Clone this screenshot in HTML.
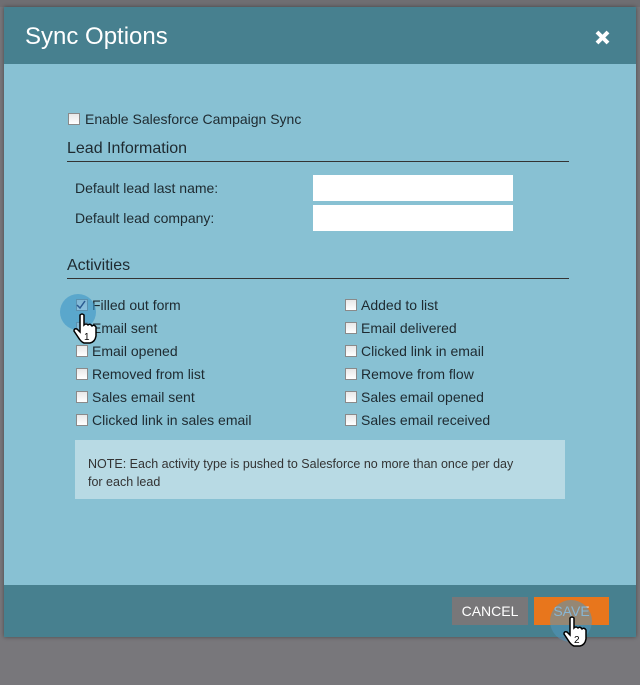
<!DOCTYPE html><html><head><style>
body{margin:0;width:640px;height:685px;background:#78777b;position:relative;overflow:hidden;font-family:"Liberation Sans",sans-serif;}
.a{position:absolute}
.t{font-size:14px;color:#1e2a30;white-space:nowrap}
.cb{position:absolute;width:10px;height:10px;border:1px solid #8a8a8a;background:linear-gradient(#e8e8e8,#fff);}
</style></head><body>
<div class="a" style="left:0;top:0;width:640px;height:7px;background:#6f6e72"></div>
<div class="a" style="left:4px;top:7px;width:632px;height:630px;background:#88c1d3;box-shadow:0 0 4px rgba(0,0,0,.4)"></div>
<div class="a" style="left:4px;top:7px;width:632px;height:57px;background:#47808f"></div>
<div class="a" style="left:25px;top:23px;font-size:24px;color:#fff">Sync Options</div>
<svg class="a" style="left:595px;top:30px" width="15" height="15" viewBox="0 0 15 15"><path d="M2 2L13 13M13 2L2 13" stroke="#fff" stroke-width="4"/></svg>
<div class="cb" style="left:68px;top:113px"></div><div class="a t" style="left:85px;top:111px">Enable Salesforce Campaign Sync</div>
<div class="a" style="left:67px;top:140px;font-size:16px;color:#1e2a30">Lead Information</div>
<div class="a" style="left:67px;top:161px;width:502px;height:1px;background:#333"></div>
<div class="a t" style="left:75px;top:180px">Default lead last name:</div>
<div class="a" style="left:313px;top:175px;width:200px;height:26px;background:#fff"></div>
<div class="a t" style="left:75px;top:210px">Default lead company:</div>
<div class="a" style="left:313px;top:205px;width:200px;height:26px;background:#fff"></div>
<div class="a" style="left:67px;top:257px;font-size:16px;color:#1e2a30">Activities</div>
<div class="a" style="left:67px;top:278px;width:502px;height:1px;background:#333"></div>
<div class="cb" style="left:76px;top:299px"></div><div class="a t" style="left:92px;top:297px">Filled out form</div>
<div class="cb" style="left:76px;top:322px"></div><div class="a t" style="left:92px;top:320px">Email sent</div>
<div class="cb" style="left:76px;top:345px"></div><div class="a t" style="left:92px;top:343px">Email opened</div>
<div class="cb" style="left:76px;top:368px"></div><div class="a t" style="left:92px;top:366px">Removed from list</div>
<div class="cb" style="left:76px;top:391px"></div><div class="a t" style="left:92px;top:389px">Sales email sent</div>
<div class="cb" style="left:76px;top:414px"></div><div class="a t" style="left:92px;top:412px">Clicked link in sales email</div>
<div class="cb" style="left:345px;top:299px"></div><div class="a t" style="left:361px;top:297px">Added to list</div>
<div class="cb" style="left:345px;top:322px"></div><div class="a t" style="left:361px;top:320px">Email delivered</div>
<div class="cb" style="left:345px;top:345px"></div><div class="a t" style="left:361px;top:343px">Clicked link in email</div>
<div class="cb" style="left:345px;top:368px"></div><div class="a t" style="left:361px;top:366px">Remove from flow</div>
<div class="cb" style="left:345px;top:391px"></div><div class="a t" style="left:361px;top:389px">Sales email opened</div>
<div class="cb" style="left:345px;top:414px"></div><div class="a t" style="left:361px;top:412px">Sales email received</div>
<div class="a" style="left:60px;top:294px;width:36px;height:36px;border-radius:50%;background:rgba(60,150,200,.6)"></div>
<svg class="a" style="left:76px;top:300px" width="10" height="10"><path d="M1 5L4 8L9 1" stroke="#2a5a90" stroke-width="1.5" fill="none"/></svg>
<svg class="a" style="left:72px;top:312px" width="30" height="34" viewBox="0 0 30 34"><path d="M8 3Q10 1 12 3L12 13Q14 11 16 13Q18 11 20 14Q22 12 24 15L24 24Q23 30 18 31L12 31Q9 30 6 25L2 19Q2 16 5 17L8 20Z" fill="#fff" stroke="#000" stroke-width="1.5"/><text x="12" y="28" font-size="10" font-family="Liberation Sans" fill="#000">1</text></svg>
<div class="a" style="left:75px;top:440px;width:490px;height:59px;background:#b8dae4"></div>
<div class="a" style="left:88px;top:455px;font-size:12.5px;color:#333;line-height:18px">NOTE: Each activity type is pushed to Salesforce no more than once per day<br>for each lead</div>
<div class="a" style="left:4px;top:585px;width:632px;height:52px;background:#47808f"></div>
<div class="a" style="left:452px;top:597px;width:76px;height:28px;background:#787779;color:#fff;font-size:14px;text-align:center;line-height:28px">CANCEL</div>
<div class="a" style="left:534px;top:597px;width:75px;height:28px;background:#e8761c;color:#cde;font-size:14px;text-align:center;line-height:28px">SAVE</div>
<div class="a" style="left:550px;top:600px;width:42px;height:42px;border-radius:50%;background:rgba(80,150,190,.55)"></div>
<svg class="a" style="left:562px;top:614px" width="30" height="36" viewBox="0 0 30 34"><path d="M8 3Q10 1 12 3L12 13Q14 11 16 13Q18 11 20 14Q22 12 24 15L24 24Q23 30 18 31L12 31Q9 30 6 25L2 19Q2 16 5 17L8 20Z" fill="#fff" stroke="#000" stroke-width="1.5"/><text x="12" y="28" font-size="10" font-family="Liberation Sans" fill="#000">2</text></svg>
</body></html>
